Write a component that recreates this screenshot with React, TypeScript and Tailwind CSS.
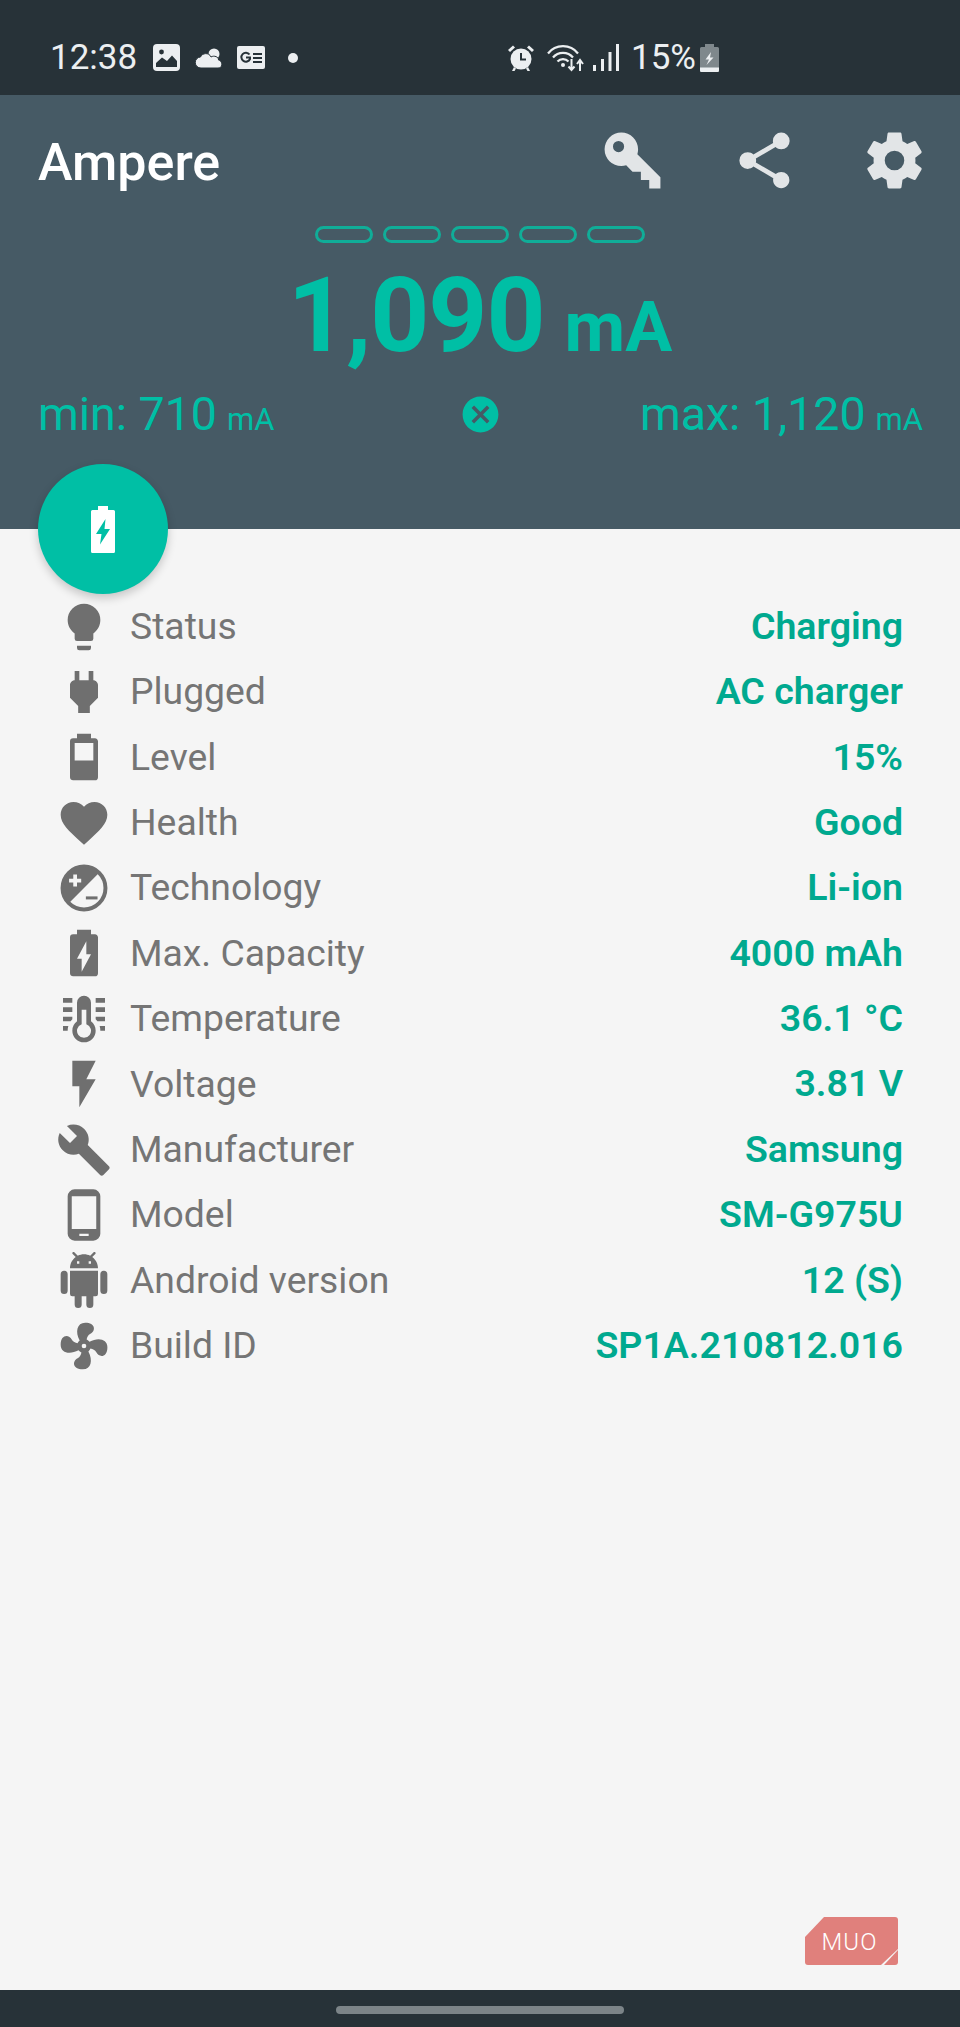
const GRAY = "#6f6f6f";

const rows = [
  { label: "Status", value: "Charging", icon: "M12,2A7,7 0 0,0 5,9C5,11.38 6.19,13.47 8,14.74V17A1,1 0 0,0 9,18H15A1,1 0 0,0 16,17V14.74C17.81,13.47 19,11.38 19,9A7,7 0 0,0 12,2M9,21A1,1 0 0,0 10,22H14A1,1 0 0,0 15,21V20H9V21Z" },
  { label: "Plugged", value: "AC charger", icon: "M16,7V3H14V7H10V3H8V7H8C7,7 6,8 6,9V14.5L9.5,18V21H14.5V18L18,14.5V9C18,8 17,7 16,7Z" },
  { label: "Level", value: "15%", icon: "M16,13.5H8V6H16M16.67,4H15V2H9V4H7.33A1.33,1.33 0 0,0 6,5.33V20.67C6,21.4 6.6,22 7.33,22H16.67A1.33,1.33 0 0,0 18,20.67V5.33C18,4.6 17.4,4 16.67,4Z" },
  { label: "Health", value: "Good", icon: "M12,21.35L10.55,20.03C5.4,15.36 2,12.27 2,8.5C2,5.41 4.42,3 7.5,3C9.24,3 10.91,3.81 12,5.08C13.09,3.81 14.76,3 16.5,3C19.58,3 22,5.41 22,8.5C22,12.27 18.6,15.36 13.45,20.03L12,21.35Z" },
  { label: "Technology", value: "Li-ion", icon: "tech" },
  { label: "Max. Capacity", value: "4000 mAh", icon: "M16.67,4H15V2H9V4H7.33A1.33,1.33 0 0,0 6,5.33V20.67C6,21.4 6.6,22 7.33,22H16.67A1.33,1.33 0 0,0 18,20.67V5.33C18,4.6 17.4,4 16.67,4M11,20V14.5H9L13,7V12.5H15L11,20Z" },
  { label: "Temperature", value: "36.1 °C", icon: "M17,3H21V5H17V3M17,7H21V9H17V7M17,11H21V13H17.75L17,12.1V11M21,15V17H19C19,16.31 18.9,15.63 18.71,15H21M7,3V5H3V3H7M7,7V9H3V7H7M7,11V12.1L6.25,13H3V11H7M3,15H5.29C5.1,15.63 5,16.31 5,17H3V15M15,13V5A3,3 0 0,0 9,5V13A5,5 0 0,0 7,17A5,5 0 0,0 17,17C17,15.36 16.21,13.9 15,13ZM13,8V14.2A3,3 0 1,1 11,14.2V8Z" },
  { label: "Voltage", value: "3.81 V", icon: "M7,2V13H10V22L17,10H13L17,2H7Z" },
  { label: "Manufacturer", value: "Samsung", icon: "M22.7,19L13.6,9.9C14.5,7.6 14,4.9 12.1,3C10.1,1 7.1,0.6 4.7,1.7L9,6L6,9L1.6,4.7C0.4,7.1 0.9,10.1 2.9,12.1C4.8,14 7.5,14.5 9.8,13.6L18.9,22.7C19.3,23.1 19.9,23.1 20.3,22.7L22.6,20.4C23.1,20 23.1,19.3 22.7,19Z" },
  { label: "Model", value: "SM-G975U", icon: "M17.25,18H6.75V4H17.25M14,21H10V20H14M16,1H8A3,3 0 0,0 5,4V20A3,3 0 0,0 8,23H16A3,3 0 0,0 19,20V4A3,3 0 0,0 16,1Z" },
  { label: "Android version", value: "12 (S)", icon: "M15,5H14V4H15M10,5H9V4H10M15.53,2.16L16.84,0.85C17.03,0.66 17.03,0.34 16.84,0.14C16.64,-0.05 16.32,-0.05 16.13,0.14L14.65,1.62C13.85,1.23 12.95,1 12,1C11.04,1 10.14,1.23 9.34,1.63L7.85,0.14C7.66,-0.05 7.34,-0.05 7.15,0.14C6.95,0.34 6.95,0.66 7.15,0.85L8.46,2.16C6.97,3.26 6,5 6,7H18C18,5 17,3.25 15.53,2.16M20.5,8A1.5,1.5 0 0,0 19,9.5V16.5A1.5,1.5 0 0,0 20.5,18A1.5,1.5 0 0,0 22,16.5V9.5A1.5,1.5 0 0,0 20.5,8M3.5,8A1.5,1.5 0 0,0 2,9.5V16.5A1.5,1.5 0 0,0 3.5,18A1.5,1.5 0 0,0 5,16.5V9.5A1.5,1.5 0 0,0 3.5,8M6,18A1,1 0 0,0 7,19H8V22.5A1.5,1.5 0 0,0 9.5,24A1.5,1.5 0 0,0 11,22.5V19H13V22.5A1.5,1.5 0 0,0 14.5,24A1.5,1.5 0 0,0 16,22.5V19H17A1,1 0 0,0 18,18V8H6V18Z" },
  { label: "Build ID", value: "SP1A.210812.016", icon: "M12,11A1,1 0 0,0 11,12A1,1 0 0,0 12,13A1,1 0 0,0 13,12A1,1 0 0,0 12,11M12.5,2C17,2 17.11,5.57 14.75,6.75C13.76,7.24 13.32,8.29 13.13,9.22C13.61,9.42 14.03,9.73 14.35,10.13C18.05,8.13 22.03,8.92 22.03,12.5C22.03,17 18.46,17.1 17.28,14.73C16.78,13.74 15.72,13.3 14.79,13.11C14.59,13.59 14.28,14 13.88,14.34C15.87,18.03 15.08,22 11.5,22C7,22 6.91,18.42 9.27,17.24C10.25,16.75 10.69,15.71 10.89,14.79C10.4,14.59 9.97,14.27 9.65,13.87C5.96,15.85 2,15.07 2,11.5C2,7 5.56,6.89 6.74,9.26C7.24,10.25 8.29,10.68 9.22,10.87C9.41,10.39 9.73,9.97 10.14,9.65C8.15,5.96 8.94,2 12.5,2Z" },
];

const TechIcon = () => (
  <svg viewBox="0 0 24 24" className="h-14 w-14">
    <circle cx="12" cy="12" r="9.2" fill="none" stroke={GRAY} strokeWidth="1.7" />
    <path d="M5.5,18.5A9.2,9.2 0 0,1 18.5,5.5Z" fill={GRAY} />
    <path d="M7.4,6.2H9V8H10.8V9.6H9V11.4H7.4V9.6H5.6V8H7.4Z" fill="#f5f5f5" />
    <path d="M12.8,15.6H17.8V16.9H12.8Z" fill={GRAY} />
  </svg>
);

const RowIcon = ({ d }: { d: string }) =>
  d === "tech" ? (
    <TechIcon />
  ) : (
    <svg viewBox="0 0 24 24" className="h-14 w-14" fill={GRAY}>
      <path d={d} fillRule="evenodd" />
    </svg>
  );

const HeaderIcon = ({ d }: { d: string }) => (
  <svg viewBox="0 0 24 24" className="h-[67px] w-[67px]" fill="#e2e5e7">
    <path d={d} fillRule="evenodd" />
  </svg>
);

const StatusBar = () => (
  <div className="flex h-[95px] items-center bg-[#273238] pt-[20px] text-[#eceff1]">
    <span className="ml-[50px] w-[103px] text-[35px] leading-none">12:38</span>
    {/* gallery */}
    <svg viewBox="0 0 27 27" className="h-[27px] w-[27px]">
      <rect width="27" height="27" rx="4" fill="#eceff1" />
      <circle cx="8.5" cy="8" r="2.4" fill="#273238" />
      <path d="M3,23V19L9,13.5L14,17L19,11.5L24,17V23Z" fill="#273238" />
    </svg>
    {/* weather */}
    <svg viewBox="0 0 28 22" className="ml-[15px] h-[22px] w-[28px]">
      <circle cx="19" cy="7" r="5.5" fill="#eceff1" />
      <path d="M6,21A5.5,5.5 0 0,1 5.5,10C7,6 14,5 16,10C19,8 24,10 23.5,13C27,13 29,21 23,21Z" fill="#eceff1" stroke="#273238" strokeWidth="1" />
    </svg>
    {/* news */}
    <svg viewBox="0 0 28 23" className="ml-[14px] h-[23px] w-[28px]">
      <rect width="28" height="23" rx="2" fill="#eceff1" />
      <path d="M9,11.5H13V13A4.5,4.5 0 1,1 12.5,8.5" fill="none" stroke="#273238" strokeWidth="2" />
      <path d="M16,7H25V9H16ZM16,11H25V13H16ZM16,15H25V17H16Z" fill="#273238" />
    </svg>
    <span className="ml-[23px] h-[10px] w-[10px] rounded-full bg-[#eceff1]" />
    {/* alarm */}
    <svg viewBox="0 0 28 28" className="ml-[209px] h-[28px] w-[28px]">
      <circle cx="14" cy="15" r="10.5" fill="#eceff1" />
      <path d="M14,9V15.5H19" fill="none" stroke="#273238" strokeWidth="2" />
      <path d="M1,6L6,1.5L8,3.5L3,8ZM27,6L22,1.5L20,3.5L25,8ZM5,27L7,23L9,24.5L7.5,27ZM23,27L21,23L19,24.5L20.5,27Z" fill="#eceff1" />
    </svg>
    {/* wifi */}
    <svg viewBox="0 0 37 28" className="ml-[12px] h-[28px] w-[37px]">
      <path d="M1,9.5A19,19 0 0,1 31,9.5M6,13.5A13,13 0 0,1 26,13.5M10.5,17.5A7.5,7.5 0 0,1 21.5,17.5" fill="none" stroke="#eceff1" strokeWidth="2.2" />
      <circle cx="16" cy="21" r="2" fill="#eceff1" />
      <path d="M24.5,15V25M21.5,22.5L24.5,26L27.5,22.5M33,27V17M30,20L33,16L36,20" fill="none" stroke="#eceff1" strokeWidth="2" />
    </svg>
    {/* signal */}
    <svg viewBox="0 0 26 27" className="ml-[9px] h-[27px] w-[26px]" fill="#eceff1">
      <rect x="0" y="21" width="3" height="6" />
      <rect x="8" y="15" width="3" height="12" />
      <rect x="15.5" y="8" width="3" height="19" />
      <rect x="23" y="0" width="3" height="27" />
    </svg>
    <span className="ml-[12px] w-[69px] text-[35px] leading-none">15%</span>
    {/* battery */}
    <svg viewBox="0 0 19 28" className="h-[28px] w-[19px]">
      <path d="M5,0H14V3H17.5A1.5,1.5 0 0,1 19,4.5V26.5A1.5,1.5 0 0,1 17.5,28H1.5A1.5,1.5 0 0,1 0,26.5V4.5A1.5,1.5 0 0,1 1.5,3H5Z" fill="#7f888c" />
      <path d="M0,23.5H19V26.5A1.5,1.5 0 0,1 17.5,28H1.5A1.5,1.5 0 0,1 0,26.5Z" fill="#eceff1" />
      <path d="M11,8L5.5,15.5H9L6.5,21L13.5,13.5H10Z" fill="#eceff1" />
    </svg>
  </div>
);

const Header = () => (
  <div className="h-[434px] bg-[#465a65] pt-[31px]">
    <div className="flex h-[68px] items-center pl-[38px] pr-[32px]">
      <h1 className="mt-[6px] flex-1 text-[52px] font-medium leading-none text-white">Ampere</h1>
      <HeaderIcon d="M22,18V22H18V19H15V16H12L9.74,13.74C9.19,13.91 8.61,14 8,14A6,6 0 0,1 8,2A6,6 0 0,1 14,8C14,8.61 13.91,9.19 13.74,9.74L22,18M7,5A2,2 0 1,0 7,9A2,2 0 1,0 7,5Z" />
      <div className="w-[65px]" />
      <HeaderIcon d="M18,16.08C17.24,16.08 16.56,16.38 16.04,16.85L8.91,12.7C8.96,12.47 9,12.24 9,12C9,11.76 8.96,11.53 8.91,11.3L15.96,7.19C16.5,7.69 17.21,8 18,8A3,3 0 0,0 21,5A3,3 0 0,0 18,2A3,3 0 0,0 15,5C15,5.24 15.04,5.47 15.09,5.7L8.04,9.81C7.5,9.31 6.79,9 6,9A3,3 0 0,0 3,12A3,3 0 0,0 6,15C6.79,15 7.5,14.69 8.04,14.19L15.16,18.34C15.11,18.55 15.08,18.77 15.08,19C15.08,20.61 16.39,21.91 18,21.91C19.61,21.91 20.92,20.61 20.92,19A2.92,2.92 0 0,0 18,16.08Z" />
      <div className="w-[63px]" />
      <HeaderIcon d="M12,15.5A3.5,3.5 0 0,1 8.5,12A3.5,3.5 0 0,1 12,8.5A3.5,3.5 0 0,1 15.5,12A3.5,3.5 0 0,1 12,15.5M19.43,12.97C19.47,12.65 19.5,12.33 19.5,12C19.5,11.67 19.47,11.34 19.43,11L21.54,9.37C21.73,9.22 21.78,8.95 21.66,8.73L19.66,5.27C19.54,5.05 19.27,4.96 19.05,5.05L16.56,6.05C16.04,5.66 15.5,5.32 14.87,5.07L14.5,2.42C14.46,2.18 14.25,2 14,2H10C9.75,2 9.54,2.18 9.5,2.42L9.13,5.07C8.5,5.32 7.96,5.66 7.44,6.05L4.95,5.05C4.73,4.96 4.46,5.05 4.34,5.27L2.34,8.73C2.21,8.95 2.27,9.22 2.46,9.37L4.57,11C4.53,11.34 4.5,11.67 4.5,12C4.5,12.33 4.53,12.65 4.57,12.97L2.46,14.63C2.27,14.78 2.21,15.05 2.34,15.27L4.34,18.73C4.46,18.95 4.73,19.03 4.95,18.95L7.44,17.94C7.96,18.34 8.5,18.68 9.13,18.93L9.5,21.58C9.54,21.82 9.75,22 10,22H14C14.25,22 14.46,21.82 14.5,21.58L14.87,18.93C15.5,18.67 16.04,18.34 16.56,17.94L19.05,18.95C19.27,19.03 19.54,18.95 19.66,18.73L21.66,15.27C21.78,15.05 21.73,14.78 21.54,14.63L19.43,12.97Z" />
    </div>

    {/* charge pills */}
    <div className="mt-[32px] flex justify-center gap-[10px]">
      {[0, 1, 2, 3, 4].map((i) => (
        <div key={i} className="h-[17px] w-[58px] rounded-full border-[3px] border-[#10ad98]" />
      ))}
    </div>

    <div className="mt-[23px] flex h-[100px] items-baseline justify-center gap-[20px] text-[#00bfa5]">
      <span className="text-[103px] font-bold leading-[100px] tracking-[-1px]">1,090</span>
      <span className="text-[70px] font-bold leading-none">mA</span>
    </div>

    <div className="mt-[20px] flex h-[56px] items-center pl-[38px] pr-[37px] text-[#00bfa5]">
      <div className="flex flex-1 items-baseline gap-[10px]">
        <span className="text-[46.5px] font-normal leading-none">min: 710</span>
        <span className="text-[31px] font-normal leading-none">mA</span>
      </div>
      <svg viewBox="0 0 24 24" className="h-[43px] w-[43px]" fill="#00bfa5">
        <path d="M12,2C6.47,2 2,6.47 2,12C2,17.53 6.47,22 12,22C17.53,22 22,17.53 22,12C22,6.47 17.53,2 12,2M17,15.59L15.59,17L12,13.41L8.41,17L7,15.59L10.59,12L7,8.41L8.41,7L12,10.59L15.59,7L17,8.41L13.41,12L17,15.59Z" fillRule="evenodd" />
      </svg>
      <div className="flex flex-1 items-baseline justify-end gap-[10px]">
        <span className="text-[46.5px] font-normal leading-none">max: 1,120</span>
        <span className="text-[31px] font-normal leading-none">mA</span>
      </div>
    </div>
  </div>
);

const Fab = () => (
  <div className="absolute left-[38px] top-[464px] flex h-[130px] w-[130px] items-center justify-center rounded-full bg-[#00bfa5] shadow-[0_4px_10px_rgba(0,0,0,0.2)]">
    <svg viewBox="0 0 24 47" className="h-[47px] w-[24px]">
      <path
        d="M7,0H17V4H22.5A1.5,1.5 0 0,1 24,5.5V45.5A1.5,1.5 0 0,1 22.5,47H1.5A1.5,1.5 0 0,1 0,45.5V5.5A1.5,1.5 0 0,1 1.5,4H7ZM14.5,13L5,28H10.5L9,38.5L19,23H13.5Z"
        fill="#ffffff"
        fillRule="evenodd"
      />
    </svg>
  </div>
);

const Watermark = () => (
  <div className="absolute left-[805px] top-[1917px] flex h-[49px] w-[93px] items-center justify-center">
    <svg viewBox="0 0 93 49" className="absolute inset-0 h-[49px] w-[93px]">
      <path d="M19,0H90A3,3 0 0,1 93,3V32L76,48H3A3,3 0 0,1 0,45V20Z" fill="#e0807c" />
      <path d="M93,33V45A3,3 0 0,1 90,48H79Z" fill="#e0807c" />
    </svg>
    <span className="relative mr-[4px] text-[24px] font-light leading-none tracking-[1px] text-white">MUO</span>
  </div>
);

export default function App() {
  return (
    <div className="relative flex h-[2027px] w-[960px] flex-col overflow-hidden bg-[#f5f5f5] font-[Roboto,sans-serif]">
      <StatusBar />
      <Header />
      <Fab />

      <div className="flex-1 pt-[65px]">
        {rows.map((row) => (
          <div key={row.label} className="flex h-[65.36px] items-center pl-[56px] pr-[57px]">
            <RowIcon d={row.icon} />
            <span className="ml-[18px] flex-1 text-[37.3px] leading-none text-[#757575]">{row.label}</span>
            <span className="text-[37.5px] font-semibold leading-none text-[#00a98f]">{row.value}</span>
          </div>
        ))}
      </div>

      <Watermark />

      <div className="flex h-[37px] justify-center bg-[#273238] pt-[16px]">
        <div className="h-[8px] w-[288px] rounded-full bg-[#7c8488]" />
      </div>
    </div>
  );
}
